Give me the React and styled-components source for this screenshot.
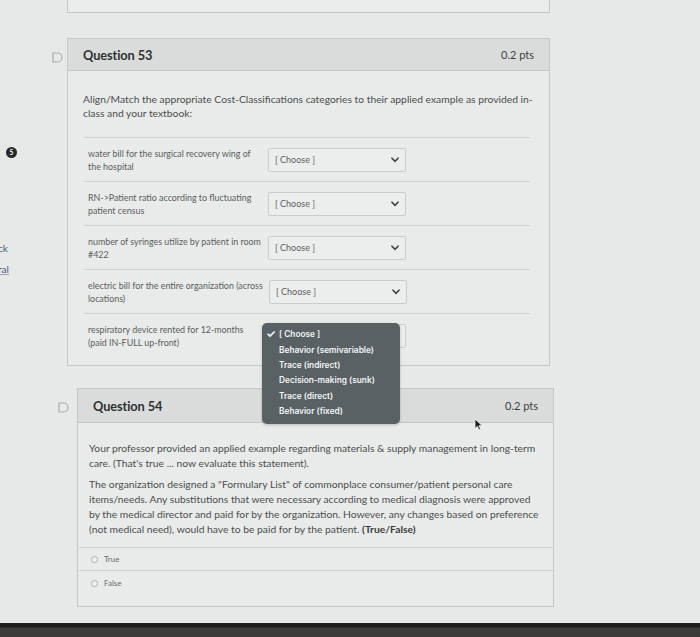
import React from "react";
import styled, { createGlobalStyle } from "styled-components";

const Global = createGlobalStyle`
  html, body { margin: 0; padding: 0; }
  body { font-family: Lato, "Open Sans", Arial, sans-serif; background: #e6e9e7; }
  * { box-sizing: border-box; }
`;

const Page = styled.div`
  width: 700px;
  height: 637px;
  background: #e6e9e7;
  position: relative;
  overflow: hidden;
  display: flex;
  flex-direction: column;
`;

const Content = styled.div`
  flex: 1;
  display: grid;
  grid-template-columns: 48px 1fr;
  min-height: 0;
`;

const Sidebar = styled.aside`
  display: flex;
  flex-direction: column;
  padding-top: 147px;
  font-size: 10px;
  color: #4b5a7a;
`;

const Badge = styled.span`
  width: 11px;
  height: 11px;
  margin-left: 6px;
  border-radius: 50%;
  background: #25292b;
  color: #fff;
  font-size: 6.5px;
  font-weight: 700;
  display: flex;
  align-items: center;
  justify-content: center;
`;

const SideLink = styled.span`
  display: block;
  margin-left: -2px;
  margin-top: ${(p) => p.$gap}px;
  line-height: 12px;
  text-decoration: ${(p) => (p.$underline ? "underline" : "none")};
  text-decoration-color: #9aa6c0;
`;

const Main = styled.main`
  display: flex;
  flex-direction: column;
`;

const TopCard = styled.div`
  margin-left: 19px;
  width: 483px;
  height: 13px;
  border: 1px solid #c3c7c5;
  border-top: none;
  background: #e9ecea;
`;

const QuestionRow = styled.section`
  display: flex;
  margin-top: ${(p) => p.$top}px;
  margin-left: ${(p) => p.$shift}px;
`;

const FlagCol = styled.div`
  width: 19px;
  flex: none;
  padding: 9px 0 0 ${(p) => p.$indent}px;
`;

const Card = styled.div`
  width: ${(p) => p.$w}px;
  border: 1px solid #c3c7c5;
  background: #e8ebe9;
  position: relative;
`;

const Header = styled.header`
  position: relative;
  height: ${(p) => p.$h}px;
  background: #d9dcda;
  border-bottom: 1px solid #c3c7c5;
  display: flex;
  align-items: center;
  justify-content: space-between;
  padding: 0 15px 0 15px;
`;

const QTitle = styled.h2`
  margin: 0;
  font-size: 12.8px;
  font-weight: 700;
  color: #2e3131;
  letter-spacing: -0.1px;
`;

const Points = styled.span`
  font-size: 11px;
  color: #3c3f3f;
`;

const Body = styled.div`
  padding: ${(p) => p.$pad};
`;

const Para = styled.p`
  margin: 0 0 ${(p) => p.$mb || 0}px;
  font-size: 10.3px;
  line-height: ${(p) => p.$lh || 14}px;
  color: #4a4e4e;
  white-space: nowrap;
`;

const Strong = styled.strong`
  font-weight: 700;
  color: #3a3d3d;
`;

const MatchList = styled.ul`
  list-style: none;
  margin: 17px 0 0 1px;
  padding: 0;
  width: 446px;
`;

const MatchRow = styled.li`
  height: 44px;
  border-top: 1px solid #cfd2d0;
  display: flex;
  align-items: center;
  padding-left: 4px;
  gap: 2px;
`;

const Label = styled.span`
  width: 178px;
  font-size: 8.9px;
  line-height: 13px;
  color: #595d5d;
  white-space: nowrap;
`;

const SelectBox = styled.div`
  position: relative;
  width: 138px;
  height: 24px;
  margin-left: ${(p) => p.$offset || 0}px;
  border: 1px solid #c9cdcb;
  border-radius: 2px;
  background: #eceeed;
  display: flex;
  align-items: center;
  justify-content: space-between;
  padding: 0 6px 0 6px;
  font-size: 9px;
  color: #5a5e5e;
`;

const SelectText = styled.span`
  visibility: ${(p) => (p.$hidden ? "hidden" : "visible")};
`;

const Menu = styled.ul`
  position: absolute;
  left: -7px;
  top: -2px;
  width: 138px;
  margin: 0;
  padding: 4px 0 5px 4px;
  list-style: none;
  background: #596164;
  border-radius: 5px;
  box-shadow: 0 1px 3px rgba(0, 0, 0, 0.2);
  z-index: 2;
`;

const MenuItem = styled.li`
  display: flex;
  align-items: center;
  height: 15.4px;
  font-family: Inter, "Open Sans", sans-serif;
  font-size: 8.3px;
  font-weight: 600;
  color: #f3f5f5;
  white-space: nowrap;
`;

const Check = styled.span`
  width: 13px;
  flex: none;
  font-size: 11px;
  font-weight: 700;
  line-height: 1;
`;

const Answers = styled.ul`
  list-style: none;
  padding: 0;
  margin: 10px -12px 0 -10px;
`;

const Answer = styled.li`
  height: 24px;
  border-top: ${(p) => (p.$first ? "1px solid #ced1cf" : "none")};
  border-bottom: ${(p) => (p.$first ? "1px solid #ced1cf" : "none")};
  display: flex;
  align-items: center;
  padding-left: 12px;
  gap: 6px;
  font-size: 8px;
  color: #6a6e6e;
`;

const Radio = styled.span`
  width: 7px;
  height: 7px;
  border-radius: 50%;
  border: 1px solid #a9adab;
  background: #f1f3f2;
`;

const Cursor = styled.svg`
  position: absolute;
  right: 70px;
  top: 29px;
`;

const Bezel = styled.div`
  height: 14px;
  flex: none;
  margin-top: 16px;
  background: linear-gradient(#1c1e1f 0, #1c1e1f 4px, #3f3d3a 5px, #3b3936 100%);
`;

const Flag = () => (
  <svg width="11" height="11" viewBox="0 0 11 11">
    <path d="M1 1 H5.5 A4.5 4.5 0 0 1 5.5 10 H1 Z" fill="none" stroke="#a8acaa" strokeWidth="1.2" />
  </svg>
);

const Chevron = () => (
  <svg width="8" height="6" viewBox="0 0 8 6">
    <path d="M1 1.2 L4 4.4 L7 1.2" fill="none" stroke="#3d4242" strokeWidth="1.6" strokeLinecap="round" />
  </svg>
);

const options = [
  "[ Choose ]",
  "Behavior (semivariable)",
  "Trace (indirect)",
  "Decision-making (sunk)",
  "Trace (direct)",
  "Behavior (fixed)",
];

const matches = [
  ["water bill for the surgical recovery wing of", "the hospital"],
  ["RN->Patient ratio according to fluctuating", "patient census"],
  ["number of syringes utilize by patient in room", "#422"],
  ["electric bill for the entire organization (across", "locations)"],
  ["respiratory device rented for 12-months", "(paid IN-FULL up-front)"],
];

export default function App() {
  return (
    <Page>
      <Global />
      <Content>
        <Sidebar>
          <Badge>5</Badge>
          <SideLink $gap={84}>ck</SideLink>
          <SideLink $gap={9} $underline>ral</SideLink>
        </Sidebar>
        <Main>
          <TopCard />
          <QuestionRow $top={25} $shift={0}>
            <FlagCol $indent={4}>
              <Flag />
            </FlagCol>
            <Card $w={483}>
              <Header $h={32}>
                <QTitle>Question 53</QTitle>
                <Points>0.2 pts</Points>
              </Header>
              <Body $pad="21px 15px 8px 15px">
                <Para>
                  Align/Match the appropriate Cost-Classifications categories to their applied example as provided in-
                  <br />
                  class and your textbook:
                </Para>
                <MatchList>
                  {matches.map((m, i) => {
                    const open = i === matches.length - 1;
                    return (
                      <MatchRow key={i}>
                        <Label>
                          {m[0]}
                          <br />
                          {m[1]}
                        </Label>
                        <SelectBox $offset={i === 3 ? 1 : 0}>
                          <SelectText $hidden={open}>[ Choose ]</SelectText>
                          <Chevron />
                          {open && (
                            <Menu>
                              {options.map((o, j) => (
                                <MenuItem key={o}>
                                  <Check>{j === 0 ? "✓" : ""}</Check>
                                  {o}
                                </MenuItem>
                              ))}
                            </Menu>
                          )}
                        </SelectBox>
                      </MatchRow>
                    );
                  })}
                </MatchList>
              </Body>
            </Card>
          </QuestionRow>
          <QuestionRow $top={22} $shift={10}>
            <FlagCol $indent={0}>
              <Flag />
            </FlagCol>
            <Card $w={477}>
              <Header $h={34}>
                <QTitle>Question 54</QTitle>
                <Points>0.2 pts</Points>
                <Cursor width="9" height="13" viewBox="0 0 9 13">
                  <path d="M1 1 L1 10.5 L3.4 8.3 L5 12 L6.6 11.3 L5 7.7 L8.2 7.7 Z" fill="#1b1d1e" stroke="#f2f2f2" strokeWidth="0.8" />
                </Cursor>
              </Header>
              <Body $pad="18px 12px 11px 11px">
                <Para $lh={15} $mb={6}>
                  Your professor provided an applied example regarding materials &amp; supply management in long-term
                  <br />
                  care. (That's true ... now evaluate this statement).
                </Para>
                <Para $lh={15}>
                  The organization designed a "Formulary List" of commonplace consumer/patient personal care
                  <br />
                  items/needs. Any substitutions that were necessary according to medical diagnosis were approved
                  <br />
                  by the medical director and paid for by the organization. However, any changes based on preference
                  <br />
                  (not medical need), would have to be paid for by the patient. <Strong>(True/False)</Strong>
                </Para>
                <Answers>
                  <Answer $first>
                    <Radio />
                    True
                  </Answer>
                  <Answer>
                    <Radio />
                    False
                  </Answer>
                </Answers>
              </Body>
            </Card>
          </QuestionRow>
        </Main>
      </Content>
      <Bezel />
    </Page>
  );
}
